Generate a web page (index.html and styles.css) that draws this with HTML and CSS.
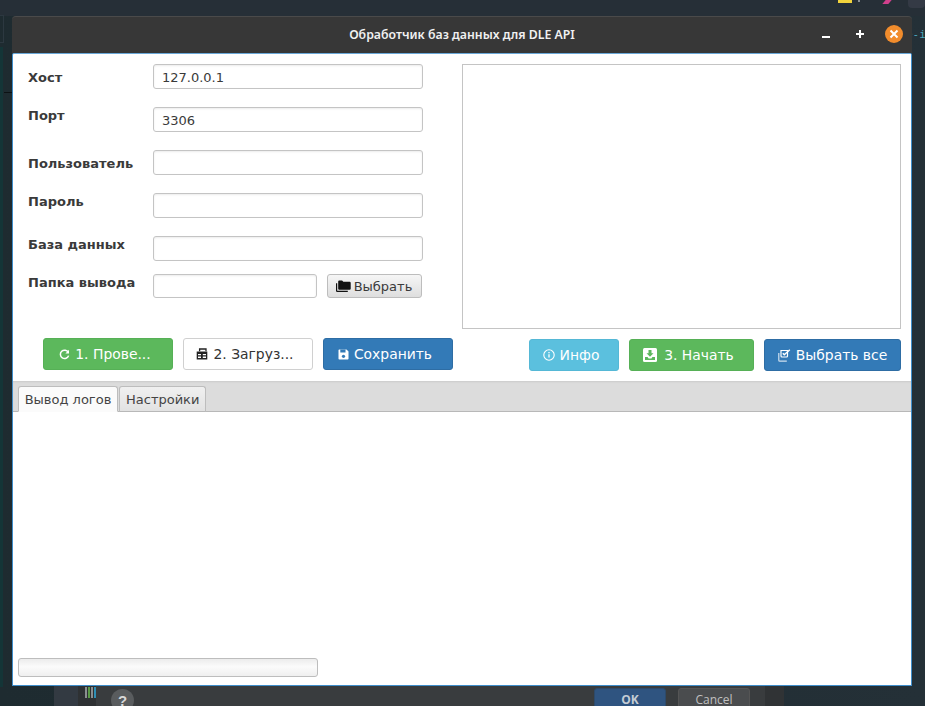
FILE: index.html
```html
<!DOCTYPE html>
<html lang="ru">
<head>
<meta charset="utf-8">
<title>Обработчик баз данных для DLE API</title>
<link rel="stylesheet" href="styles.css">
</head>
<body>
<div class="desktop">
  <div class="bg-top">
    <span class="bg-yellow"></span>
    <span class="bg-dot"></span>
    <span class="bg-pink"></span>
    <span class="bg-box"></span>
  </div>
  <span class="bg-panel"></span>
  <span class="bg-teal"></span>
  <span class="bg-rule"></span>
  <span class="bg-code">e-in</span>
  <div class="bg-bottom">
    <span class="bg-side"></span>
    <span class="bg-dark"></span>
    <span class="bg-bars"><i class="b1"></i><i class="b2"></i><i class="b3"></i><i class="b4"></i></span>
    <span class="bg-help">?</span>
    <span class="bg-ok">OK</span>
    <span class="bg-cancel">Cancel</span>
    <span class="bg-end"></span>
  </div>

  <div class="window">
    <header class="titlebar">
      <span class="title">Обработчик баз данных для DLE API</span>
      <span class="win-btn win-min"></span>
      <svg class="win-btn win-max" width="10" height="10" viewBox="0 0 10 10"><path d="M5 1v8M1 5h8" stroke="#fff" stroke-width="2"/></svg>
      <span class="win-close"><svg width="10" height="10" viewBox="0 0 10 10"><path d="M1.500 1.500l7 7M8.500 1.500l-7 7" stroke="#fff" stroke-width="2"/></svg></span>
    </header>
    <div class="client">
      <section class="upper">
        <form class="form">
          <label class="lbl lbl-mid">Хост</label>
          <input class="field" type="text" value="127.0.0.1">
          <label class="lbl lbl-high">Порт</label>
          <input class="field" type="text" value="3306">
          <label class="lbl lbl-mid">Пользователь</label>
          <input class="field" type="text">
          <label class="lbl lbl-high">Пароль</label>
          <input class="field" type="text">
          <label class="lbl lbl-high">База данных</label>
          <input class="field" type="text">
          <label class="lbl lbl-folder">Папка вывода</label>
          <div class="folder-row">
            <input class="field field-short" type="text">
            <button class="btn-plain" type="button">
              <svg width="15" height="13" viewBox="0 0 15 13"><path d="M0 3.200h1.200v7.600h10.600V12H1.200Q0 12 0 10.800z" fill="#111"/><path d="M2.200 1.600Q2.200.5 3.300.5h2.800l1.200 1.300h6.300q1.100 0 1.100 1.100v5.800q0 1.100-1.100 1.100H3.300q-1.100 0-1.100-1.100z" fill="#111"/></svg>
              <span>Выбрать</span>
            </button>
          </div>
        </form>
        <div class="listbox"></div>
      </section>
      <section class="actions">
        <div class="group">
          <button class="btn btn-green btn-130" type="button">
            <svg width="11" height="11" viewBox="0 0 11 11"><path d="M9.300 3.400A4.200 4.200 0 1 0 9.600 6.600" fill="none" stroke="#fff" stroke-width="1.500"/><path d="M10 .8v3.600H6.400z" fill="#fff"/></svg>
            <span>1. Прове...</span>
          </button>
          <button class="btn btn-white btn-130" type="button">
            <svg width="12" height="12" viewBox="0 0 12 12"><path d="M.7 3.500h10.600V11.500H.7z" fill="#222"/><path d="M2 6h3v1.300H2zM6.800 6H10v1.300H6.800zM2 8.500h3v1.500H2zM6.800 8.500H10V10H6.800z" fill="#fff"/><path d="M3.600 3.200V1h6.400v2.200" fill="none" stroke="#222" stroke-width="1.300"/></svg>
            <span>2. Загруз...</span>
          </button>
          <button class="btn btn-blue btn-130" type="button">
            <svg width="11" height="11" viewBox="0 0 11 11"><path d="M.5 1.300Q.5.5 1.300.5h7.200l2 2v7.200q0 .8-.8.8H1.300q-.8 0-.8-.8z" fill="#fff"/><path d="M2.300.5h5.200v3H2.300z" fill="#337ab7"/><circle cx="5.500" cy="7.300" r="1.600" fill="#337ab7"/></svg>
            <span>Сохранить</span>
          </button>
        </div>
        <div class="group group-right">
          <button class="btn btn-info btn-90" type="button">
            <svg width="12" height="12" viewBox="0 0 12 12"><circle cx="6" cy="6" r="5.200" fill="none" stroke="#fff" stroke-width="1.100"/><path d="M6 5.200v3.400M6 3v1.300" stroke="#fff" stroke-width="1.300"/></svg>
            <span>Инфо</span>
          </button>
          <button class="btn btn-green btn-125" type="button">
            <svg width="14" height="14" viewBox="0 0 14 14"><path d="M1.500 0h11Q14 0 14 1.500v11q0 1.500-1.500 1.500h-11Q0 14 0 12.500v-11Q0 0 1.500 0z" fill="#fff"/><path d="M5.500 2h3v3.200h2L7 8.800 3.500 5.200h2zM2 9h2.600l1 1.500h2.800l1-1.500H12v3H2z" fill="#5cb85c"/></svg>
            <span>3. Начать</span>
          </button>
          <button class="btn btn-blue btn-137" type="button">
            <svg width="13" height="13" viewBox="0 0 13 13"><path d="M3 1.500h6.500v5.500q0 1-1 1H4q-1 0-1-1z" fill="none" stroke="#fff" stroke-width="1.200"/><path d="M.8 4v7.200q0 1 1 1h7" fill="none" stroke="#cfe0ef" stroke-width="1.200"/><path d="M4.800 4.200l1.500 1.600 5.500-5" fill="none" stroke="#fff" stroke-width="1.400"/></svg>
            <span>Выбрать все</span>
          </button>
        </div>
      </section>
      <nav class="tabs">
        <span class="tab tab-active">Вывод логов</span>
        <span class="tab">Настройки</span>
      </nav>
      <section class="log">
        <div class="progress"></div>
      </section>
    </div>
  </div>
</div>
</body>
</html>
```
FILE: styles.css
```css
* { box-sizing: border-box; }
html, body { margin: 0; padding: 0; }
body { font-family: "DejaVu Sans", sans-serif; background: #222d33; overflow: hidden; }

.desktop { position: relative; width: 925px; height: 706px; overflow: hidden; background: linear-gradient(90deg, #1e2b30, #243037); }

.bg-top { position: absolute; inset: 0 0 auto 0; height: 16px; background: #262f37; }
.bg-yellow { position: absolute; left: 838px; top: 0; width: 14px; height: 3px; background: #f2d33c; }
.bg-dot { position: absolute; left: 858px; top: 0; width: 2px; height: 2px; background: #8a8f94; }
.bg-pink { position: absolute; left: 884px; top: 0; width: 6px; height: 4px; background: #d0408c; transform: skewX(-40deg); }
.bg-box { position: absolute; left: 908px; top: -6px; width: 17px; height: 14px; border-radius: 4px; background: #343a45; }
.bg-panel { position: absolute; left: 0; top: 15px; width: 4px; height: 28px; border: 1px solid #2c3840; border-left: 0; }
.bg-teal { position: absolute; left: 0; top: 47px; width: 3px; height: 640px; background: #143537; }
.bg-rule { position: absolute; left: 4px; top: 92px; width: 8px; height: 1px; background: #0d1214; }
.bg-code { position: absolute; left: 906px; top: 28px; font: 11px "DejaVu Sans Mono", monospace; color: #4aa7bd; white-space: nowrap; }

.bg-bottom { position: absolute; left: 54px; top: 686px; width: 730px; height: 20px; background: #393c3e; overflow: hidden; }
.bg-side { position: absolute; left: 0; top: 0; width: 24px; height: 20px; background: #333a42; }
.bg-dark { position: absolute; left: 24px; top: 0; width: 18px; height: 20px; background: #2e3133; }
.bg-bars { position: absolute; left: 31px; top: 1px; display: flex; gap: 1px; }
.bg-bars i { display: block; width: 2px; height: 11px; }
.bg-bars .b1 { background: #8b8f90; }
.bg-bars .b2 { background: #5a9a45; }
.bg-bars .b3 { background: #8b8f90; }
.bg-bars .b4 { background: #2f8fb5; }
.bg-help { position: absolute; left: 57px; top: 3px; width: 23px; height: 23px; border-radius: 50%; background: #595c5e; color: #d8d8d8; font: bold 15px/23px "Liberation Sans", sans-serif; text-align: center; }
.bg-ok { position: absolute; left: 540px; top: 2px; width: 72px; height: 24px; border: 1px solid #2d4a6a; border-radius: 3px; background: #2f5480; color: #c4ccd4; font: bold 12px/22px "Open Sans", sans-serif; text-align: center; }
.bg-cancel { position: absolute; left: 624px; top: 2px; width: 72px; height: 24px; border: 1px solid #555; border-radius: 3px; background: #4a4c4e; color: #c0c0c0; font: 12px/22px "Open Sans", sans-serif; text-align: center; }
.bg-end { position: absolute; left: 711px; top: 0; width: 19px; height: 20px; background: #303335; }

.window { position: absolute; left: 12px; top: 16px; width: 900px; height: 670px; display: flex; flex-direction: column; }

.titlebar { flex: none; height: 37px; position: relative; display: flex; align-items: center; justify-content: center; background: #373737; border-top: 1px solid #4a4a4a; border-radius: 4px 4px 0 0; }
.title { font: 600 12.3px "Noto Sans", sans-serif; color: #f0f0f0; margin-top: -1px; }
.win-btn { position: absolute; }
.win-min { left: 810px; top: 19px; width: 8px; height: 2px; background: #fff; }
.win-max { left: 843px; top: 12px; }
.win-close { position: absolute; left: 873px; top: 8px; width: 18px; height: 18px; border-radius: 50%; background: #f28c2c; display: flex; align-items: center; justify-content: center; }

.client { flex: 1; display: flex; flex-direction: column; min-height: 0; background: #fff; border: 1px solid #3f8ecb; border-top-color: #6aa8d8; border-radius: 2px 2px 0 0; }

.upper { flex: none; display: flex; justify-content: space-between; padding: 10px 10px 0 15px; }

.form { width: 394px; display: grid; grid-template-columns: 125px 270px; grid-auto-rows: 25px; row-gap: 18px; }
.lbl { font-size: 13px; font-weight: bold; color: #3a3a3a; line-height: 16px; white-space: nowrap; }
.lbl-mid { padding-top: 6px; }
.lbl-high { padding-top: 1px; }
.lbl-folder { margin-top: -5px; padding-top: 1px; }

.field { width: 270px; height: 25px; padding: 2px 8px 0; font: 13px "DejaVu Sans", sans-serif; color: #3a3a3a; background: #fff; border: 1px solid #c4c4c4; border-radius: 3px; box-shadow: inset 0 1px 2px rgba(0,0,0,.08); outline: none; }
.field-short { width: 164px; height: 24px; }

.folder-row { display: flex; gap: 10px; margin-top: -5px; }
.btn-plain { width: 95px; height: 24px; padding: 0 1px 0 0; display: flex; align-items: center; justify-content: center; gap: 3px; font: 13px "DejaVu Sans", sans-serif; color: #3a3a3a; background: linear-gradient(#f6f6f6, #dedede); border: 1px solid #bdbdbd; border-radius: 3px; }

.listbox { width: 439px; height: 265px; background: #fff; border: 1px solid #c4c4c4; }

.actions { flex: none; height: 52px; display: flex; justify-content: space-between; padding: 9px 10px 0 30px; }
.group { display: flex; gap: 10px; }
.group-right { padding-top: 1px; }
.btn { height: 32px; padding: 0 6px 0 0; display: flex; align-items: center; justify-content: center; gap: 5px; font: 13.9px "DejaVu Sans", sans-serif; color: #fff; border: 1px solid; border-radius: 3px; }
.btn-130 { width: 130px; }
.btn-90 { width: 90px; }
.btn-125 { width: 125px; gap: 7px; }
.btn-137 { width: 137px; padding: 0; }
.btn-green { background: #5cb85c; border-color: #56b056; }
.btn-blue { background: #337ab7; border-color: #2e6da4; }
.btn-info { background: #5bc0de; border-color: #55b8d6; }
.btn-white { background: #fff; border-color: #d0d0d0; color: #333; }

.tabs { flex: none; height: 31px; display: flex; align-items: flex-end; gap: 1px; padding-left: 5px; background: #dcdcdc; border-bottom: 1px solid #b8b8b8; box-shadow: inset 0 2px 2px -1px rgba(0,0,0,.08); }
.tab { height: 26px; margin-bottom: -1px; padding: 0 6px; display: flex; align-items: center; font-size: 13px; color: #444; background: linear-gradient(#f0f0f0, #e2e2e2); border: 1px solid #bdbdbd; border-bottom-color: #b8b8b8; border-radius: 3px 3px 0 0; }
.tab-active { background: #fbfbfb; border-bottom-color: #fbfbfb; width: 100px; justify-content: center; padding: 0; }

.log { flex: 1; display: flex; align-items: flex-end; padding: 0 0 8px 5px; background: #fff; }
.progress { width: 300px; height: 19px; background: linear-gradient(#ececec, #fbfbfb 45%, #efefef); border: 1px solid #bdbdbd; border-radius: 3px; }
```
